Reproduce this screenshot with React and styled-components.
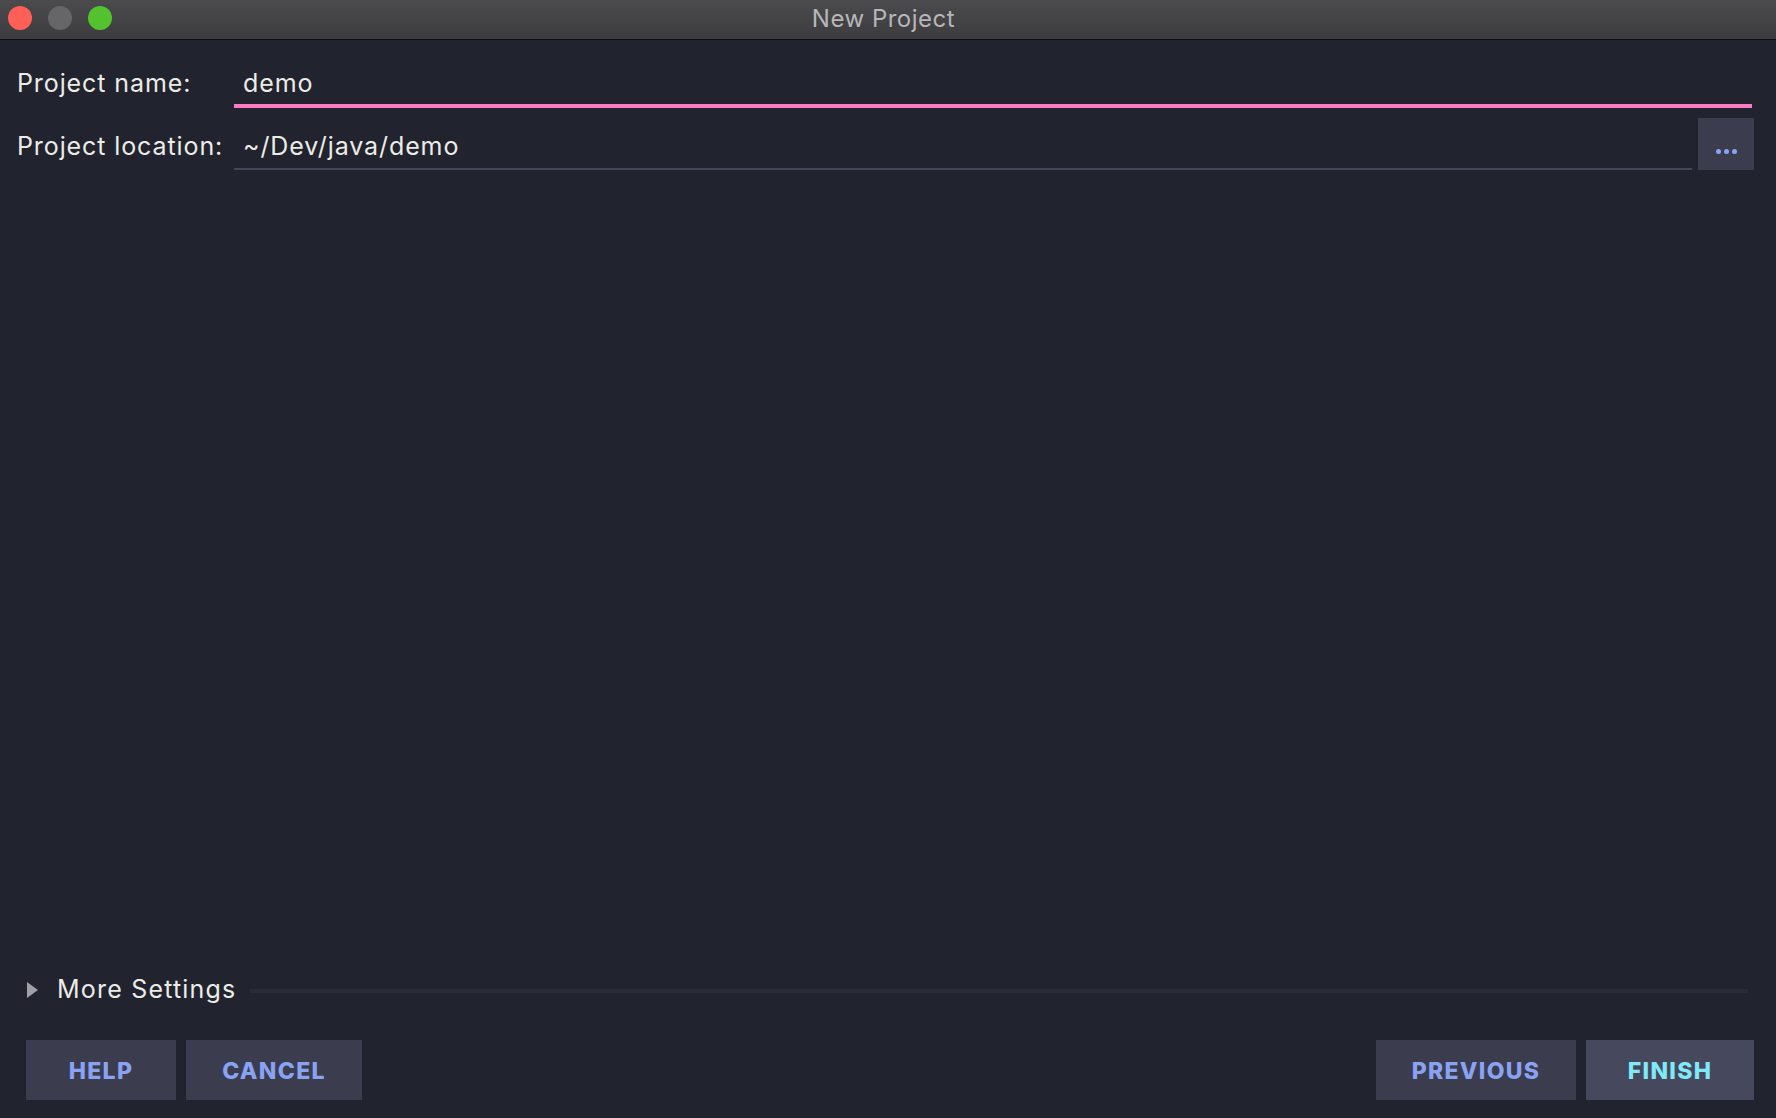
import React from 'react';
import styled, { createGlobalStyle } from 'styled-components';

const GlobalStyle = createGlobalStyle`
  html, body {
    margin: 0;
    padding: 0;
    background: #21232e;
  }
  * {
    box-sizing: border-box;
  }
`;

const Window = styled.div`
  width: 1776px;
  height: 1118px;
  display: flex;
  flex-direction: column;
  background: #21232e;
  font-family: Inter, "Noto Sans", sans-serif;
  color: #ecece6;
  overflow: hidden;
`;

const TitleBar = styled.div`
  height: 40px;
  display: grid;
  grid-template-columns: 1fr auto 1fr;
  align-items: center;
  background: linear-gradient(#4b4b4e, #3c3c3f);
  border-bottom: 1px solid #0e0e10;
`;

const Lights = styled.div`
  display: flex;
  gap: 16px;
  padding-left: 8px;
  padding-bottom: 3px;
`;

const Light = styled.span`
  width: 24px;
  height: 24px;
  border-radius: 50%;
  background: ${p => p.color};
`;

const Title = styled.div`
  font-size: 24px;
  letter-spacing: 0.5px;
  color: #b6b6b8;
  padding: 0 9px 2px 0;
`;

const Form = styled.div`
  display: flex;
  flex-direction: column;
  gap: 10px;
  padding: 16px 22px 0 17px;
`;

const Row = styled.div`
  display: flex;
  align-items: baseline;
`;

const Label = styled.label`
  width: 217px;
  flex: none;
  font-size: 25px;
  letter-spacing: 0.9px;
`;

const Field = styled.div`
  flex: 1;
  height: 52px;
  padding: 6px 0 0 9px;
  margin-right: ${p => (p.focused ? 2 : 0)}px;
  font-size: 25px;
  line-height: ${p => (p.focused ? 42 : 44)}px;
  letter-spacing: 0.9px;
  border-bottom: ${p => (p.focused ? '4px solid #ff7ac6' : '2px solid #444659')};
`;

const BrowseButton = styled.button`
  align-self: stretch;
  width: 56px;
  margin-left: 6px;
  border: none;
  background: #3b3d4f;
  display: flex;
  align-items: flex-end;
  justify-content: center;
  gap: 3px;
  padding: 0 0 16px;
`;

const Dot = styled.span`
  width: 5px;
  height: 5px;
  border-radius: 50%;
  background: #89a4f5;
`;

const Spacer = styled.div`
  flex: 1;
`;

const MoreSettings = styled.div`
  display: flex;
  align-items: center;
  padding: 0 28px 0 27px;
`;

const Arrow = styled.span`
  width: 0;
  height: 0;
  border-top: 8px solid transparent;
  border-bottom: 8px solid transparent;
  border-left: 11px solid #a0a0a6;
  margin-right: 19px;
  margin-top: 2px;
`;

const MoreLabel = styled.span`
  font-size: 25px;
  letter-spacing: 1.2px;
`;

const Divider = styled.div`
  flex: 1;
  height: 4px;
  margin-left: 13px;
  margin-top: 4px;
  background: #292b38;
`;

const ButtonBar = styled.div`
  display: flex;
  gap: 10px;
  padding: 36px 22px 18px 26px;
`;

const Button = styled.button`
  width: ${p => p.width}px;
  height: 60px;
  border: none;
  background: ${p => (p.primary ? '#46485e' : '#3b3d4f')};
  color: ${p => (p.primary ? '#80e8f7' : '#89a2f2')};
  font-family: Inter, "Noto Sans", sans-serif;
  font-weight: 800;
  font-size: 23px;
  letter-spacing: 1.3px;
  padding: 2px 0 0;
  margin-left: ${p => (p.pushRight ? 'auto' : '0')};
`;

export default function App() {
  return (
    <>
      <GlobalStyle />
      <Window>
        <TitleBar>
          <Lights>
            <Light color="#fe5f57" />
            <Light color="#666669" />
            <Light color="#54c22e" />
          </Lights>
          <Title>New Project</Title>
          <div />
        </TitleBar>
        <Form>
          <Row>
            <Label>Project name:</Label>
            <Field focused>demo</Field>
          </Row>
          <Row>
            <Label>Project location:</Label>
            <Field>~/Dev/java/demo</Field>
            <BrowseButton aria-label="Browse">
              <Dot />
              <Dot />
              <Dot />
            </BrowseButton>
          </Row>
        </Form>
        <Spacer />
        <MoreSettings>
          <Arrow />
          <MoreLabel>More Settings</MoreLabel>
          <Divider />
        </MoreSettings>
        <ButtonBar>
          <Button width={150}>HELP</Button>
          <Button width={176}>CANCEL</Button>
          <Button width={200} pushRight>PREVIOUS</Button>
          <Button width={168} primary>FINISH</Button>
        </ButtonBar>
      </Window>
    </>
  );
}
